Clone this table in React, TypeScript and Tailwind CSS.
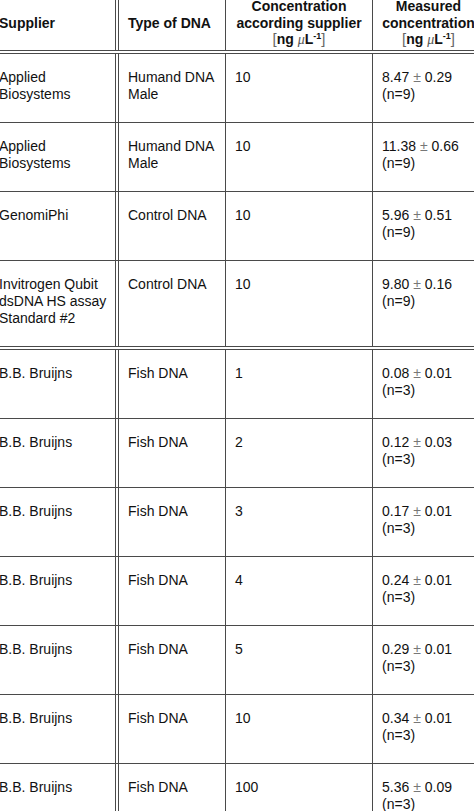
import React from "react";

type Row = {
  supplier: string[];
  dna: string[];
  conc: string;
  mean: string;
  sd: string;
  n: number;
  splitAfter?: boolean;
};

const rows: Row[] = [
  { supplier: ["Applied", "Biosystems"], dna: ["Humand DNA", "Male"], conc: "10", mean: "8.47", sd: "0.29", n: 9 },
  { supplier: ["Applied", "Biosystems"], dna: ["Humand DNA", "Male"], conc: "10", mean: "11.38", sd: "0.66", n: 9 },
  { supplier: ["GenomiPhi"], dna: ["Control DNA"], conc: "10", mean: "5.96", sd: "0.51", n: 9 },
  {
    supplier: ["Invitrogen Qubit", "dsDNA HS assay", "Standard #2"],
    dna: ["Control DNA"],
    conc: "10",
    mean: "9.80",
    sd: "0.16",
    n: 9,
    splitAfter: true,
  },
  { supplier: ["B.B. Bruijns"], dna: ["Fish DNA"], conc: "1", mean: "0.08", sd: "0.01", n: 3 },
  { supplier: ["B.B. Bruijns"], dna: ["Fish DNA"], conc: "2", mean: "0.12", sd: "0.03", n: 3 },
  { supplier: ["B.B. Bruijns"], dna: ["Fish DNA"], conc: "3", mean: "0.17", sd: "0.01", n: 3 },
  { supplier: ["B.B. Bruijns"], dna: ["Fish DNA"], conc: "4", mean: "0.24", sd: "0.01", n: 3 },
  { supplier: ["B.B. Bruijns"], dna: ["Fish DNA"], conc: "5", mean: "0.29", sd: "0.01", n: 3 },
  { supplier: ["B.B. Bruijns"], dna: ["Fish DNA"], conc: "10", mean: "0.34", sd: "0.01", n: 3 },
  { supplier: ["B.B. Bruijns"], dna: ["Fish DNA"], conc: "100", mean: "5.36", sd: "0.09", n: 3 },
];

const cols = "grid grid-cols-[129px_107px_147px_111px]";

function Unit() {
  return (
    <span className="whitespace-nowrap">
      <span className="font-normal text-[#666] text-[15px]">[</span>
      ng <span className="font-normal italic text-[#555]" style={{ fontFamily: '"Liberation Serif", serif' }}>μ</span>L
      <sup className="text-[9px] -top-[5px]">-1</sup>
      <span className="font-normal text-[#666] text-[15px]">]</span>
    </span>
  );
}

function Lines({ items }: { items: string[] }) {
  return (
    <>
      {items.map((t) => (
        <div key={t}>{t}</div>
      ))}
    </>
  );
}

export default function App() {
  return (
    <div
      className="w-[474px] h-[811px] overflow-hidden bg-white text-[#111] text-[14px] leading-[17px]"
      style={{ fontFamily: '"Liberation Sans", Arial, sans-serif' }}
    >
      <div className="-ml-[10px] -mt-[2px] w-[494px]">
        {/* header */}
        <div className={`${cols} font-bold leading-[16.5px] border-b-4 border-double border-[#4a4a4a]`}>
          <div className="pl-[9px] pb-px flex flex-col justify-center border-r-4 border-double border-[#4a4a4a]">
            Supplier
          </div>
          <div className="pl-[9px] pb-px flex flex-col justify-center border-r border-[#4a4a4a]">
            Type of DNA
          </div>
          <div className="pb-px flex flex-col items-center text-center border-r border-[#4a4a4a]">
            <div>Concentration</div>
            <div>according supplier</div>
            <Unit />
          </div>
          <div className="pb-px flex flex-col items-center text-center">
            <div>Measured</div>
            <div>concentration</div>
            <Unit />
          </div>
        </div>

        {rows.map((r, i) => (
          <div
            key={i}
            className={`${cols} ${
              r.splitAfter ? "border-b-4 border-double" : "border-b"
            } border-[#4a4a4a]`}
          >
            <div className="pl-[9px] pt-[15.5px] pb-[18.5px] border-r-4 border-double border-[#4a4a4a] whitespace-nowrap">
              <Lines items={r.supplier} />
            </div>
            <div className="pl-[9px] pt-[15.5px] pb-[18.5px] border-r border-[#4a4a4a] whitespace-nowrap">
              <Lines items={r.dna} />
            </div>
            <div className="pl-[9px] pt-[15.5px] pb-[18.5px] border-r border-[#4a4a4a]">{r.conc}</div>
            <div className="pl-[9px] pt-[15.5px] pb-[18.5px] whitespace-nowrap">
              <div>
                {r.mean} <span className="text-[#777]">±</span> {r.sd}
              </div>
              <div>(n={r.n})</div>
            </div>
          </div>
        ))}
      </div>
    </div>
  );
}
